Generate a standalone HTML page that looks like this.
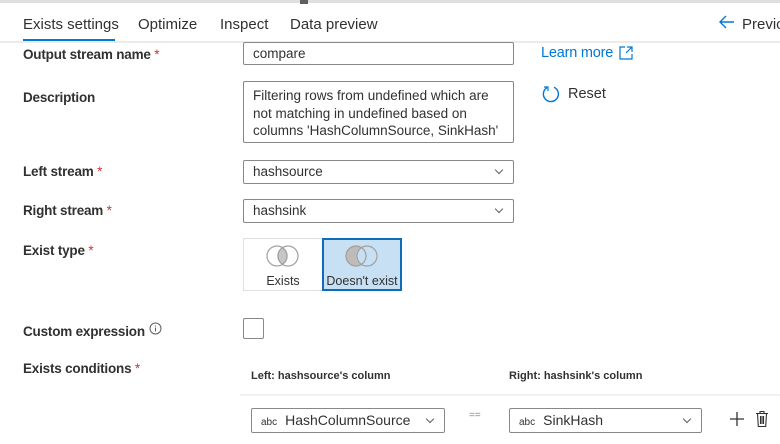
<!DOCTYPE html>
<html><head><meta charset="utf-8"><style>
*{box-sizing:border-box;margin:0;padding:0}
body{width:780px;height:444px;overflow:hidden;background:#fff;font-family:"Liberation Sans",sans-serif;color:#323130;position:relative;font-size:13px}
.a{position:absolute}
.lbl{position:absolute;left:23px;font-size:13.5px;font-weight:bold;color:#323130;letter-spacing:-0.2px}
.lbl i{color:#d13438;font-style:normal;font-weight:normal}
.in{position:absolute;border:1px solid #8a8886;border-radius:2px;background:#fff;font-size:13.5px;padding-left:9px}
.chev{position:absolute;right:11px;top:6px;width:6px;height:6px;border-right:1px solid #605e5c;border-bottom:1px solid #605e5c;transform:rotate(45deg)}
.tab{position:absolute;top:16px;font-size:15px;color:#323130}
</style></head><body>
<div class="a" style="left:0;top:0;width:780px;height:3px;background:#e1dfdd"></div>
<div class="a" style="left:300px;top:0;width:8px;height:4px;background:#605e5c"></div>
<div class="tab" style="left:23px">Exists settings</div>
<div class="a" style="left:23px;top:39px;width:92px;height:3px;background:#0078d4"></div>
<div class="tab" style="left:138px">Optimize</div>
<div class="tab" style="left:220px">Inspect</div>
<div class="tab" style="left:290px">Data preview</div>
<svg class="a" style="left:717px;top:14px" width="20" height="16" viewBox="0 0 20 16"><path d="M17 8H3M9 2L3 8l6 6" fill="none" stroke="#0078d4" stroke-width="1.4"/></svg>
<div class="tab" style="left:742px">Previo</div>
<div class="a" style="left:0;top:41px;width:780px;height:2px;background:#edebe9"></div>

<div class="lbl" style="top:47px">Output stream name <i>*</i></div>
<div class="in" style="left:243px;top:42px;width:271px;height:23px;line-height:21px">compare</div>
<div class="a" style="left:541px;top:45px;font-size:14.5px;color:#0078d4;letter-spacing:-0.2px">Learn more</div>
<svg class="a" style="left:619px;top:46px" width="14" height="14" viewBox="0 0 14 14"><path d="M6 1H1v12h12V8M8 1h5v5M13 1L7 7" fill="none" stroke="#0078d4" stroke-width="1.2"/></svg>

<div class="lbl" style="top:90px;font-weight:bold">Description</div>
<div class="in" style="left:243px;top:81px;width:271px;height:62px;padding:5px 9px;line-height:17.5px;font-size:13.5px">Filtering rows from undefined which are not matching in undefined based on columns 'HashColumnSource, SinkHash'</div>
<svg class="a" style="left:541px;top:84px" width="20" height="20" viewBox="0 0 20 20"><path d="M13 3.2A7.5 7.5 0 1 1 6 3.6" fill="none" stroke="#0078d4" stroke-width="1.4"/><path d="M3 3h4v4" fill="none" stroke="#0078d4" stroke-width="1.2"/></svg>
<div class="a" style="left:568px;top:86px;font-size:14.5px">Reset</div>

<div class="lbl" style="top:164px">Left stream <i>*</i></div>
<div class="in" style="left:243px;top:160px;width:271px;height:24px;line-height:22px">hashsource<span class="chev"></span></div>
<div class="lbl" style="top:203px">Right stream <i>*</i></div>
<div class="in" style="left:243px;top:199px;width:271px;height:24px;line-height:22px">hashsink<span class="chev"></span></div>

<div class="lbl" style="top:243px">Exist type <i>*</i></div>
<div class="a" style="left:243px;top:238px;width:80px;height:53px;border:1px solid #e1dfdd;background:#fff"></div>
<svg class="a" style="left:265px;top:244px" width="36" height="24" viewBox="0 0 36 24"><path d="M17.5 3.2a10 10 0 0 1 0 17.6a10 10 0 0 1 0-17.6z" fill="#c8c6c4"/><circle cx="12" cy="12" r="10" fill="none" stroke="#a19f9d" stroke-width="1.2"/><circle cx="23" cy="12" r="10" fill="none" stroke="#a19f9d" stroke-width="1.2"/></svg>
<div class="a" style="left:243px;top:274px;width:80px;text-align:center;font-size:12.5px">Exists</div>
<div class="a" style="left:322px;top:238px;width:80px;height:53px;border:2px solid #0f6cbd;background:#c7e0f4"></div>
<svg class="a" style="left:344px;top:244px" width="36" height="24" viewBox="0 0 36 24"><path d="M17.5 3.2a10 10 0 0 0 0 17.6a10 10 0 0 1-5.5 1.2a10 10 0 0 1 0-20a10 10 0 0 1 5.5 1.2z" fill="#bebbb8"/><circle cx="12" cy="12" r="10" fill="none" stroke="#a19f9d" stroke-width="1.2"/><circle cx="23" cy="12" r="10" fill="none" stroke="#a19f9d" stroke-width="1.2"/></svg>
<div class="a" style="left:322px;top:274px;width:80px;text-align:center;font-size:12.5px">Doesn't exist</div>

<div class="lbl" style="top:324px">Custom expression</div>
<svg class="a" style="left:149px;top:322px" width="13" height="13" viewBox="0 0 13 13"><circle cx="6.5" cy="6.5" r="5.5" fill="none" stroke="#605e5c"/><path d="M6.5 5.5v4M6.5 3.5v1" stroke="#605e5c"/></svg>
<div class="a" style="left:243px;top:318px;width:21px;height:21px;border:1px solid #8a8886;border-radius:2px"></div>

<div class="lbl" style="top:361px">Exists conditions <i>*</i></div>
<div class="a" style="left:251px;top:370px;font-size:11px;font-weight:bold;color:#323130">Left: hashsource's column</div>
<div class="a" style="left:509px;top:370px;font-size:11px;font-weight:bold;color:#323130">Right: hashsink's column</div>
<div class="a" style="left:240px;top:394px;width:540px;height:2px;background:#f3f2f1"></div>

<div class="in" style="left:251px;top:408px;width:194px;height:25px;line-height:23px;font-size:14px"><span style="font-size:10px;margin-right:8px">abc</span>HashColumnSource<span class="chev" style="top:7px"></span></div>
<div class="a" style="left:469px;top:410px;font-size:10px;color:#8a8886">==</div>
<div class="in" style="left:509px;top:408px;width:193px;height:25px;line-height:23px;font-size:14px"><span style="font-size:10px;margin-right:8px">abc</span>SinkHash<span class="chev" style="top:7px"></span></div>
<svg class="a" style="left:729px;top:411px" width="16" height="16" viewBox="0 0 16 16"><path d="M8 1v14M1 8h14" stroke="#323130" stroke-width="1.3"/></svg>
<svg class="a" style="left:755px;top:410px" width="14" height="18" viewBox="0 0 14 18"><path d="M1 3.5h12M5 3.5V1.5h4v2M2.5 3.5l.8 13h7.4l.8-13M5.5 6v8M7 6v8M8.5 6v8" fill="none" stroke="#323130" stroke-width="1.1"/></svg>
</body></html>
